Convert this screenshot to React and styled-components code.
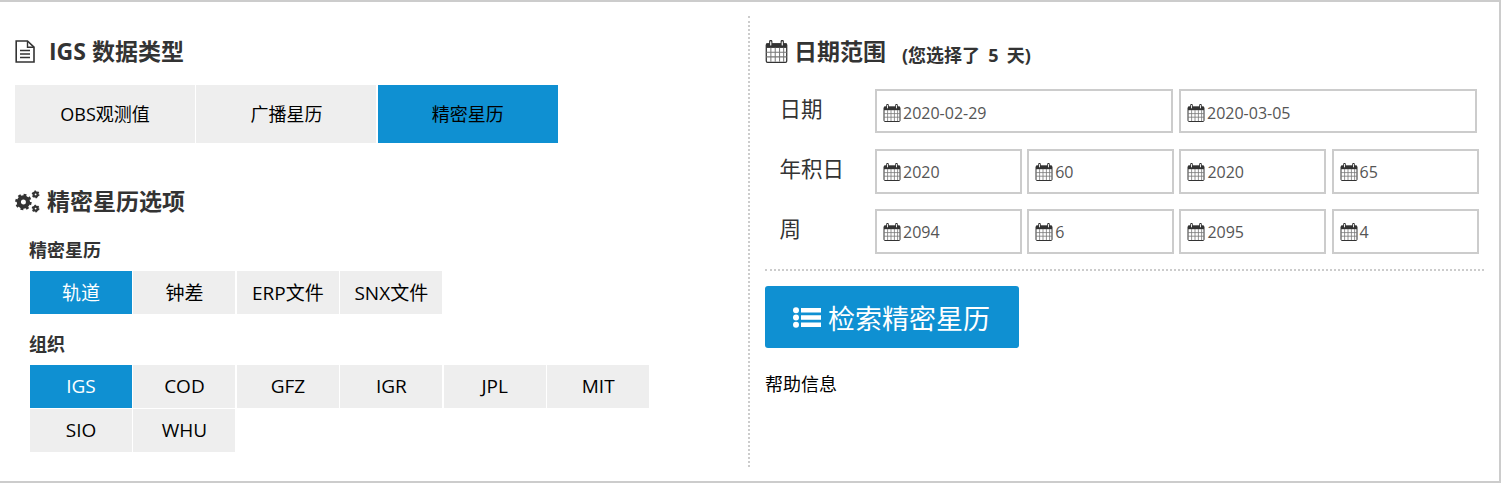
import React from 'react';
import styled, { createGlobalStyle } from 'styled-components';

const Global = createGlobalStyle`
  html, body { margin: 0; padding: 0; background: #fff; }
  body { font-family: "Open Sans", "Noto Sans CJK SC", sans-serif; color: #000; overflow: hidden; }
  * { box-sizing: border-box; }
`;

const Page = styled.div`
  width: 1507px; height: 485px;
`;
const Frame = styled.div`
  width: 1501px; height: 483px;
  border: solid #ccc; border-width: 2px 2px 2px 0;
  display: flex;
  padding-top: 14px;
`;
const LeftPane = styled.section`
  width: 750px; height: 451px;
  border-right: 2px dotted #ccc;
  padding: 18px 0 0 15px;
`;
const RightPane = styled.section`
  flex: 1;
  padding: 18px 15px 0 15px;
`;
const Heading = styled.h2`
  margin: 0; height: 34px;
  display: flex; align-items: center;
  font-size: 23px; font-weight: 700; line-height: 34px; color: #333;
  gap: ${p => p.$gap || 6}px;
  svg { flex: none; color: #333; }
`;
const Note = styled.span`
  font-size: 18px; font-weight: 700; margin: 8px 0 0 10px; white-space: pre; word-spacing: 3.5px;
`;
const Tabs = styled.div`
  display: flex; gap: 1.4px; margin-top: 17px;
`;
const Tab = styled.div`
  width: 180px; height: 58px;
  display: flex; align-items: center; justify-content: center;
  padding-bottom: 2px;
  font-size: 18px;
  background: ${p => (p.$on ? '#0f90d2' : '#eee')};
  color: #000;
`;
const SecondHeading = styled(Heading)`
  margin-top: 41px;
`;
const Options = styled.div`
  padding-left: 15px;
`;
const OptionLabel = styled.div`
  font-size: 18px; font-weight: 700; color: #333; margin-left: -1px;
  height: 24px; line-height: 24px;
  margin-top: ${p => p.$top}px;
`;
const Chips = styled.div`
  display: grid; grid-template-columns: repeat(6, 102px);
  column-gap: 1.45px; row-gap: 1px;
  margin-top: 9px;
`;
const Chip = styled.div`
  height: 43px;
  display: flex; align-items: center; justify-content: center;
  padding-bottom: 2px;
  font-size: 19px;
  background: ${p => (p.$on ? '#0f90d2' : '#eee')};
  color: ${p => (p.$on ? '#fff' : '#000')};
`;
const FormRows = styled.div`
  margin-top: 21px;
  display: flex; flex-direction: column; gap: 15.5px;
`;
const Row = styled.div`
  display: flex; height: 44.5px;
`;
const RowLabel = styled.div`
  width: 110px; padding-left: 14.5px;
  font-size: 21.5px; color: #333; line-height: 40px;
`;
const Inputs = styled.div`
  display: flex; gap: ${p => (p.$wide ? 6 : 5.2)}px;
`;
const Field = styled.div`
  width: ${p => (p.$wide ? 298 : 147)}px;
  height: ${p => (p.$wide ? 44 : 45)}px;
  border: 2px solid #ccc;
  display: flex; align-items: center; gap: 2px;
  padding: ${p => (p.$wide ? 3 : 0)}px 0 0 6px;
  font-size: 16px; color: #555;
`;
const Dotted = styled.div`
  margin-top: 15px; border-top: 2px dotted #ccc; height: 0;
`;
const SearchButton = styled.button`
  display: flex; align-items: center; gap: 7px;
  margin-top: 15px; width: 254px; height: 62px;
  padding: 2px 0 0 28px; border: 0; border-radius: 3px;
  background: #0f90d2; color: #fff;
  font: 400 27px "Open Sans", "Noto Sans CJK SC", sans-serif;
`;
const Help = styled.p`
  margin: 24px 0 0; font-size: 18px; line-height: 24px; color: #000;
`;

const CalendarIcon = ({ size = 18 }) => (
  <svg width={size} height={size} viewBox="0 0 18 18" style={{ flex: 'none' }}>
    <rect x="1" y="3" width="16" height="14.5" rx="1" fill="#fff" stroke="#333" />
    <path d="M1 2.6h16v3.6H1z" fill="#333" />
    <path d="M4.5 1.2v3M13.5 1.2v3" stroke="#333" strokeWidth="2.6" strokeLinecap="round" />
    <path d="M4.5 1.5v2.4M13.5 1.5v2.4" stroke="#fff" strokeWidth="0.9" strokeLinecap="round" />
    <path d="M4.6 6v11M8 6v11M11.4 6v11M14.6 6v11M1 9.6h16M1 13.2h16" stroke="#777" strokeWidth="0.8" />
  </svg>
);

const FileIcon = () => (
  <svg width="20" height="23" viewBox="0 0 20 23">
    <path d="M1.2 1h11.3L19 7.2V22H1.2z" fill="none" stroke="#333" strokeWidth="1.6" />
    <path d="M12.5 1v6.2H19" fill="none" stroke="#333" strokeWidth="1.4" />
    <path d="M5 10.5h10M5 14h10M5 17.5h10" stroke="#333" strokeWidth="1.6" />
  </svg>
);

const Gear = ({ cx, cy, r, w, teeth }) => {
  const circ = 2 * Math.PI * (r + w / 2);
  const seg = circ / (teeth * 2);
  return (
    <g fill="none" stroke="#333">
      <circle cx={cx} cy={cy} r={r} strokeWidth={w} />
      <circle cx={cx} cy={cy} r={r + w / 2} strokeWidth={w * 0.75} strokeDasharray={`${seg} ${seg}`} />
    </g>
  );
};

const GearsIcon = () => (
  <svg width="25" height="23" viewBox="0 0 25 23">
    <Gear cx={8.4} cy={12} r={4.6} w={4.2} teeth={8} />
    <Gear cx={20.6} cy={4.4} r={2} w={2.2} teeth={6} />
    <Gear cx={20.6} cy={18.6} r={2} w={2.2} teeth={6} />
  </svg>
);

const ListIcon = () => (
  <svg width="28" height="21" viewBox="0 0 28 21">
    <circle cx="3" cy="3.2" r="3" fill="#fff" />
    <circle cx="3" cy="10.5" r="3" fill="#fff" />
    <circle cx="3" cy="17.8" r="3" fill="#fff" />
    <path d="M8 1h20v4.4H8zM8 8.3h20v4.4H8zM8 15.6h20V20H8z" fill="#fff" />
  </svg>
);

const InputField = ({ value, wide }) => (
  <Field $wide={wide}><CalendarIcon />{value}</Field>
);

const App = () => (
  <Page>
    <Global />
    <Frame>
      <LeftPane>
        <Heading $gap={14}><FileIcon />IGS 数据类型</Heading>
        <Tabs>
          <Tab>OBS观测值</Tab>
          <Tab>广播星历</Tab>
          <Tab $on>精密星历</Tab>
        </Tabs>
        <SecondHeading $gap={7}><GearsIcon />精密星历选项</SecondHeading>
        <Options>
          <OptionLabel $top={20}>精密星历</OptionLabel>
          <Chips>
            <Chip $on>轨道</Chip>
            <Chip>钟差</Chip>
            <Chip>ERP文件</Chip>
            <Chip>SNX文件</Chip>
          </Chips>
          <OptionLabel $top={18}>组织</OptionLabel>
          <Chips>
            <Chip $on>IGS</Chip>
            <Chip>COD</Chip>
            <Chip>GFZ</Chip>
            <Chip>IGR</Chip>
            <Chip>JPL</Chip>
            <Chip>MIT</Chip>
            <Chip>SIO</Chip>
            <Chip>WHU</Chip>
          </Chips>
        </Options>
      </LeftPane>
      <RightPane>
        <Heading $gap={6}><CalendarIcon size={23} />日期范围<Note>(您选择了 5 天)</Note></Heading>
        <FormRows>
          <Row>
            <RowLabel>日期</RowLabel>
            <Inputs $wide>
              <InputField wide value="2020-02-29" />
              <InputField wide value="2020-03-05" />
            </Inputs>
          </Row>
          <Row>
            <RowLabel>年积日</RowLabel>
            <Inputs>
              <InputField value="2020" />
              <InputField value="60" />
              <InputField value="2020" />
              <InputField value="65" />
            </Inputs>
          </Row>
          <Row>
            <RowLabel>周</RowLabel>
            <Inputs>
              <InputField value="2094" />
              <InputField value="6" />
              <InputField value="2095" />
              <InputField value="4" />
            </Inputs>
          </Row>
        </FormRows>
        <Dotted />
        <SearchButton><ListIcon />检索精密星历</SearchButton>
        <Help>帮助信息</Help>
      </RightPane>
    </Frame>
  </Page>
);

export default App;
